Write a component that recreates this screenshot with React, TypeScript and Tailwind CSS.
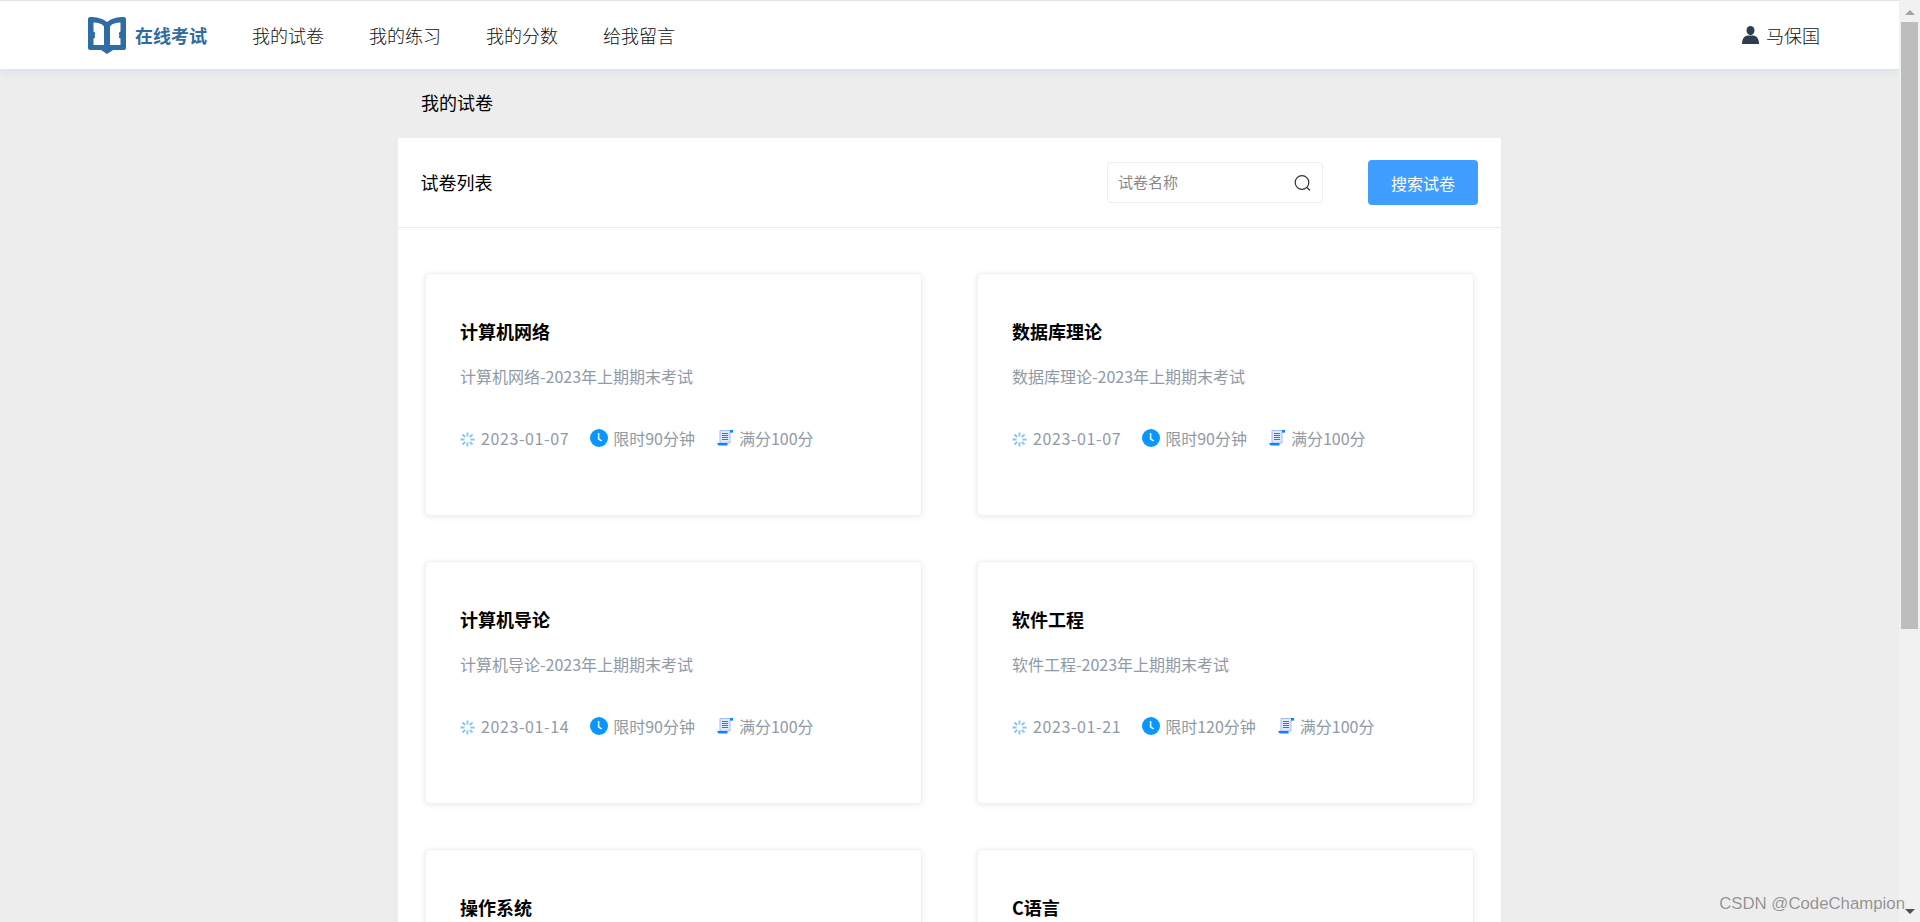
const navItems = ["我的试卷", "我的练习", "我的分数", "给我留言"];

// only the first four cards are on screen in full, the last row just shows its title
const papers: { name: string; date?: string; limit?: number }[] = [
  { name: "计算机网络", date: "2023-01-07", limit: 90 },
  { name: "数据库理论", date: "2023-01-07", limit: 90 },
  { name: "计算机导论", date: "2023-01-14", limit: 90 },
  { name: "软件工程", date: "2023-01-21", limit: 120 },
  { name: "操作系统" },
  { name: "C语言" },
];

const BookLogo = () => (
  <svg width="38" height="37" viewBox="0 0 38 37" className="shrink-0">
    <path
      fillRule="evenodd"
      fill="#2f6ca3"
      d="M2 0C8 0 14 1 19 5C24 1 30 0 36 0C37 0 38 1 38 2V31C38 32 37 33 36 33H25L19 37L13 33H2C1 33 0 32 0 31V2C0 1 1 0 2 0ZM5.5 5.5C10 5.5 14 6.5 16 9.5V28H5.5V21.5C7.5 21 7.5 19.5 6.5 18.5C7.5 17.5 7.5 15 5.5 14.5ZM32.5 5.5C28 5.5 24 6.5 22 9.5V28H32.5V21.5C30.5 21 30.5 19.5 31.5 18.5C30.5 17.5 30.5 15 32.5 14.5Z"
    />
  </svg>
);

const UserIcon = () => (
  <svg width="17" height="18" viewBox="0 0 17 18" className="shrink-0">
    <ellipse cx="8.5" cy="4.5" rx="4" ry="4.5" fill="#2c3e50" />
    <path d="M0 18C0 13 2 10 6 9.5H11C15 10 17 13 17 18Z" fill="#2c3e50" />
  </svg>
);

const SearchIcon = () => (
  <svg width="17" height="16" viewBox="0 0 17 16" fill="none" className="shrink-0">
    <circle cx="8" cy="7.5" r="6.8" stroke="#333" strokeWidth="1.2" />
    <path d="M13 12.5L16 15.5" stroke="#333" strokeWidth="1.2" />
  </svg>
);

const SpinIcon = () => (
  <svg width="15" height="15" viewBox="0 0 15 15" className="mt-[3px] shrink-0" stroke="#7cc7fb" strokeWidth="1.8">
    <path d="M7.5 0.5V4.5M7.5 10.5V14.5M0.5 7.5H4.5M10.5 7.5H14.5M2.5 2.5L5.2 5.2M9.8 9.8L12.5 12.5M12.5 2.5L9.8 5.2M5.2 9.8L2.5 12.5" />
  </svg>
);

const ClockIcon = () => (
  <svg width="18" height="18" viewBox="0 0 18 18" className="shrink-0">
    <circle cx="9" cy="9" r="9" fill="#0a96ff" />
    <path d="M8.6 4V9.8L11.6 12" fill="none" stroke="#fff" strokeWidth="1.5" />
  </svg>
);

const ScrollIcon = () => (
  <svg width="16" height="16" viewBox="0 0 16 16" className="shrink-0">
    <path d="M3 0.5H15V2.5H13V13H3Z" fill="#dbeafe" stroke="#a9b8f5" strokeWidth="1" />
    <path d="M5 3.5H11M5 5.5H11M5 7.5H11M5 9.5H11" stroke="#1d7fe8" strokeWidth="1" />
    <path d="M0 13H10.5V15.5H1.5Z" fill="#0a84ff" />
    <path d="M13 0H16V2.5H13Z" fill="#0a84ff" />
  </svg>
);

const PaperCard = ({ name, date, limit }: { name: string; date?: string; limit?: number }) => (
  <div className="h-[243px] rounded border border-[#f0f1f5] bg-white px-[34px] pt-[44px] shadow-[0_1px_6px_rgba(0,0,0,0.08)]">
    <div className="text-[18px] leading-[26px] font-bold text-black">{name}</div>
    {date && (
      <>
        <div className="mt-[19px] text-[16px] leading-[26px] text-[#8f9aa5]">{name}-2023年上期期末考试</div>
        <div className="mt-[36px] flex h-[26px] items-center text-[16px] text-[#8f9aa5]">
          <SpinIcon />
          <span className="ml-[6px] tracking-[0.6px]">{date}</span>
          <span className="ml-[21px]">
            <ClockIcon />
          </span>
          <span className="ml-[5px]">限时{limit}分钟</span>
          <span className="ml-[22px]">
            <ScrollIcon />
          </span>
          <span className="ml-[6px]">满分100分</span>
        </div>
      </>
    )}
  </div>
);

export default function App() {
  return (
    <div className="relative flex h-screen overflow-hidden bg-[#ededed] font-['Noto_Sans_CJK_SC','Liberation_Sans',sans-serif]">
      <div className="flex min-w-0 flex-1 flex-col overflow-hidden">
        <header className="z-10 flex h-[69px] shrink-0 items-center border-t border-[#e4e4e4] bg-white pr-[79px] pl-[88px] shadow-[0_2px_9px_rgba(90,150,210,0.16)]">
          <BookLogo />
          <span className="ml-[9px] text-[18px] font-bold text-[#2f6ca3]">在线考试</span>
          <nav className="ml-[45px] flex gap-[45px] text-[18px] font-light text-[#111]">
            {navItems.map((item) => (
              <a key={item}>{item}</a>
            ))}
          </nav>
          <div className="ml-auto flex items-center gap-[7px] text-[18px] font-light text-[#111]">
            <UserIcon />
            <span>马保国</span>
          </div>
        </header>

        <div className="mx-auto w-[1103px] shrink-0">
          <div className="flex h-[69px] items-center px-[23px] pb-[2px] text-[18px] text-black">我的试卷</div>
          <section className="bg-white">
            <div className="flex h-[90px] items-center border-b border-[#ececec] pr-[23px] pl-[22.5px] text-black">
              <span className="text-[18px]">试卷列表</span>
              <div className="ml-auto flex h-[41px] w-[216px] items-center justify-between rounded border border-[#eeeeee] pr-[11px] pl-[10px] text-[15px] text-[#888]">
                <span>试卷名称</span>
                <SearchIcon />
              </div>
              <button className="ml-[45px] h-[45px] w-[110px] rounded bg-[#409eff] text-[16px] text-white">搜索试卷</button>
            </div>
            <div className="grid grid-cols-2 gap-x-[55px] gap-y-[45px] px-[27px] pt-[45px] pb-[46px]">
              {papers.map((p) => (
                <PaperCard key={p.name} {...p} />
              ))}
            </div>
          </section>
        </div>
      </div>

      <aside className="flex w-[21px] shrink-0 flex-col items-center bg-[#f1f1f1] pb-[8px]">
        <div className="mt-[10px] h-0 w-0 border-x-[5px] border-b-[5px] border-x-transparent border-b-[#a3a3a3]" />
        <div className="mt-[7px] h-[607px] w-[17px] bg-[#bdbdbd]" />
        <div className="mt-auto h-0 w-0 border-x-[5px] border-t-[5px] border-x-transparent border-t-[#505050]" />
      </aside>

      <div className="absolute right-[15px] bottom-[8px] font-['Liberation_Sans',sans-serif] text-[16.8px] leading-[20px] text-black/40">
        CSDN @CodeChampion
      </div>
    </div>
  );
}
